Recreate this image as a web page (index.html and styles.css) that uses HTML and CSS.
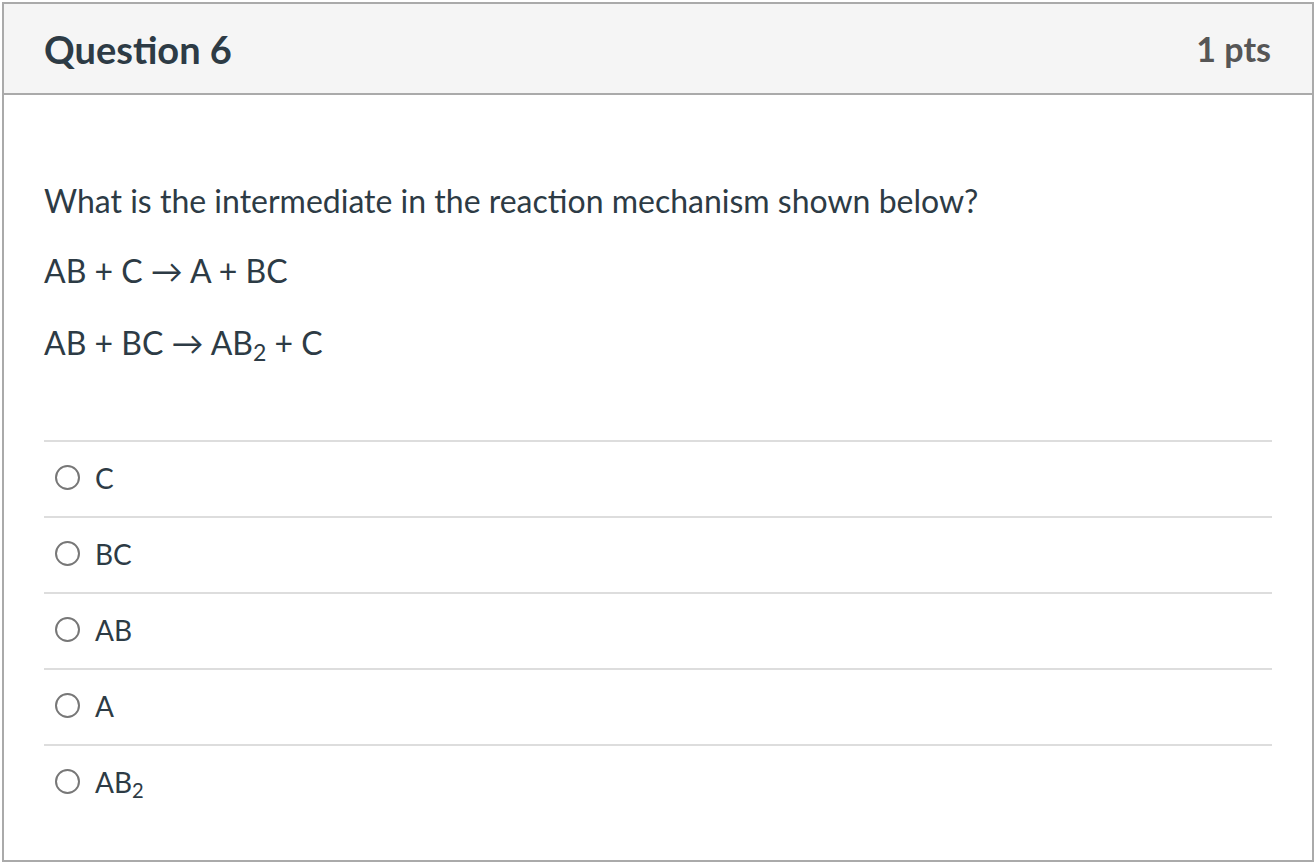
FILE: index.html
```html
<!DOCTYPE html>
<html lang="en">
<head>
<meta charset="utf-8">
<title>Question 6</title>
<link rel="stylesheet" href="styles.css">
</head>
<body>
<div class="question">
  <div class="header">
    <h2 class="name">Question 6</h2>
    <div class="points">1 pts</div>
  </div>
  <div class="body">
    <div class="text">
      <p>What is the intermediate in the reaction mechanism shown below?</p>
      <p>AB + C → A + BC</p>
      <p>AB + BC → AB<sub>2</sub> + C</p>
    </div>
    <div class="answers">
      <label class="answer"><span class="radio"></span><span class="label">C</span></label>
      <label class="answer"><span class="radio"></span><span class="label">BC</span></label>
      <label class="answer"><span class="radio"></span><span class="label">AB</span></label>
      <label class="answer"><span class="radio"></span><span class="label">A</span></label>
      <label class="answer"><span class="radio"></span><span class="label">AB<sub>2</sub></span></label>
    </div>
  </div>
</div>
</body>
</html>
```
FILE: styles.css
```css
html, body {
  margin: 0;
  padding: 0;
  background: #fff;
}
body {
  padding: 2px;
  font-family: Lato, "Liberation Sans", sans-serif;
  color: #2d3b45;
}
.question {
  border: 2px solid #aaaaaa;
  height: 860px;
  box-sizing: border-box;
  width: 1312px;
}
.header {
  display: flex;
  justify-content: space-between;
  align-items: center;
  background: #f5f5f5;
  border-bottom: 2px solid #aaaaaa;
  height: 89px;
  padding: 0 41px 0 40px;
}
.name {
  margin: 0;
  font-size: 38px;
  font-weight: 700;
  color: #2d3b45;
}
.points {
  font-size: 34px;
  font-weight: 700;
  color: #565656;
}
.body {
  padding: 84px 40px 0 40px;
}
.text p {
  margin: 0 0 26px 0;
  font-size: 32px;
  line-height: 44px;
}
.text p:last-child {
  margin-bottom: 0;
  margin-top: 28px;
}
sub {
  font-size: 0.72em;
  line-height: 0;
  vertical-align: -0.25em;
}
.answers {
  margin-top: 75px;
}
.answer {
  display: flex;
  align-items: center;
  height: 76px;
  border-top: 2px solid #dddddd;
  box-sizing: border-box;
  padding-left: 11px;
  padding-bottom: 3px;
}
.radio {
  width: 21px;
  height: 21px;
  border: 2px solid #777777;
  border-radius: 50%;
  flex: none;
  margin-right: 15px;
}
.label {
  font-size: 28px;
  color: #2d3b45;
}
```
